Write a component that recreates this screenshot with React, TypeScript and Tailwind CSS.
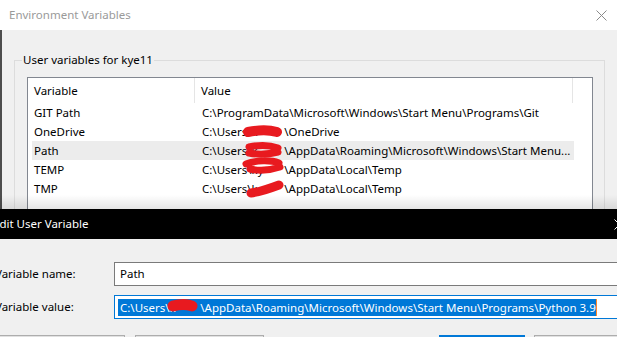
import React from "react";

type Linha = { nome: string; antes: string; oculto?: string; depois?: string; selecionada?: boolean };

const LINHAS: Linha[] = [
  { nome: "GIT Path", antes: "C:\\ProgramData\\Microsoft\\Windows\\Start Menu\\Programs\\Git" },
  { nome: "OneDrive", antes: "C:\\Users", oculto: "\\k", depois: "\\OneDrive" },
  {
    nome: "Path",
    antes: "C:\\Users",
    oculto: "\\k",
    depois: "\\AppData\\Roaming\\Microsoft\\Windows\\Start Menu...",
    selecionada: true,
  },
  { nome: "TEMP", antes: "C:\\Users", oculto: "\\ky", depois: "\\AppData\\Local\\Temp" },
  { nome: "TMP", antes: "C:\\Users", oculto: "\\k", depois: "\\AppData\\Local\\Temp" },
];

function IconeFechar({ cor }: { cor: string }) {
  return (
    <svg width="11" height="11" viewBox="0 0 11 11" className="shrink-0">
      <path d="M0.5 0.5 L10.5 10.5 M10.5 0.5 L0.5 10.5" stroke={cor} strokeWidth="1" />
    </svg>
  );
}

// Rabiscos vermelhos que escondem o nome do usuário — desenhados por cima de tudo
function Rabiscos() {
  return (
    <svg
      width="617"
      height="337"
      viewBox="0 0 617 337"
      className="pointer-events-none absolute left-0 top-0 z-20"
    >
      <g stroke="#e81a1f" strokeLinecap="round" fill="none">
        <path d="M248 132 C 258 130, 270 130, 277 132" strokeWidth="10" />
        <path d="M249 147 C 258 145, 270 145, 278 148 M 249 153 C 259 155, 270 154, 278 152" strokeWidth="7" />
        <path d="M246 164 C 256 160, 271 160, 279 163 M 250 169 C 259 171, 271 170, 280 167" strokeWidth="7" />
        <path d="M251 193 C 260 192, 271 188, 279 185" strokeWidth="9" />
        <path d="M173 306 C 180 304, 187 304, 192 306" strokeWidth="11" />
      </g>
    </svg>
  );
}

export default function App() {
  return (
    <div className="relative h-[337px] w-[617px] overflow-hidden bg-[#f0f0f0] font-['Noto_Sans',sans-serif] text-[11.5px] text-black">
      {/* Janela de trás: Environment Variables */}
      <div className="flex h-full flex-col">
        <div className="flex h-[30px] items-center justify-between bg-white pl-[9px] pr-[10px] text-[#9a9a9a]">
          <span>Environment Variables</span>
          <IconeFechar cor="#8a8a8a" />
        </div>
        <div className="flex-1 border-l-2 border-[#4d4d4d] pl-[12px] pt-[30px]">
          <div className="relative h-[200px] w-[591px] border border-[#dcdcdc] pl-[12px] pt-[16px]">
            <span className="absolute -top-[9px] left-[7px] bg-[#f0f0f0] px-[1px] leading-[16px]">
              User variables for kye11
            </span>
            <div className="h-[180px] w-[566px] border border-[#828790] bg-white">
              <div className="flex h-[25px] items-center">
                <div className="flex h-full w-[167px] items-center border-r border-[#e5e5e5] pl-[6px]">Variable</div>
                <div className="flex h-full w-[378px] items-center border-r border-[#e5e5e5] pl-[6px]">Value</div>
              </div>
              {LINHAS.map((l) => (
                <div
                  key={l.nome}
                  className={`ml-[4px] flex h-[19px] w-[542px] items-center overflow-hidden whitespace-nowrap ${
                    l.selecionada ? "bg-[#ececec]" : ""
                  }`}
                >
                  <span className="w-[168px] shrink-0 pl-[2px]">{l.nome}</span>
                  <span className="flex shrink-0 pl-[2px]">
                    <span>{l.antes}</span>
                    {l.oculto && <span className="w-[37px] overflow-hidden">{l.oculto}</span>}
                    {l.depois && <span>{l.depois}</span>}
                  </span>
                </div>
              ))}
            </div>
          </div>
        </div>
      </div>

      {/* Janela da frente: Edit User Variable */}
      <div className="absolute left-[-11px] top-[209px] z-10 w-[640px]">
        <div className="pointer-events-none absolute -top-[14px] left-0 h-[14px] w-full bg-gradient-to-b from-transparent to-black/10" />
        <div className="flex h-[30px] items-center justify-between bg-black pl-[4px] pr-[4px] text-white">
          <span>Edit User Variable</span>
          <IconeFechar cor="#ffffff" />
        </div>
        <div className="bg-[#f0f0f0] pl-[6px] pt-[23px]">
          <div className="grid grid-cols-[119px_1fr] items-center gap-y-[9px]">
            <span>Variable name:</span>
            <div className="flex h-[24px] items-center border border-[#7a7a7a] bg-white pl-[5px]">Path</div>
            <span>Variable value:</span>
            <div className="flex h-[24px] items-center border border-[#0078d7] bg-white pl-[3px]">
              <span className="inline-flex h-[17px] items-center whitespace-nowrap bg-[#0078d7] pl-[2px] leading-[17px] text-white">
                <span>C:\Users</span>
                <span className="w-[35px] overflow-hidden">\k</span>
                <span>\AppData\Roaming\Microsoft\Windows\Start Menu\Programs\Python 3.9</span>
              </span>
              <span className="h-[17px] w-[1px] bg-[#ff8728]" />
            </div>
          </div>
          <div className="mt-[16px] flex h-[30px]">
            <div className="h-[23px] w-[130px] border border-[#adadad] bg-[#e1e1e1]" />
            <div className="ml-[10px] h-[23px] w-[129px] border border-[#adadad] bg-[#e1e1e1]" />
            <div className="ml-[175px] h-[23px] w-[86px] border-2 border-[#0078d7] bg-[#e1e1e1]" />
            <div className="ml-[9px] h-[23px] w-[86px] border border-[#adadad] bg-[#e1e1e1]" />
          </div>
        </div>
      </div>

      <Rabiscos />
    </div>
  );
}
